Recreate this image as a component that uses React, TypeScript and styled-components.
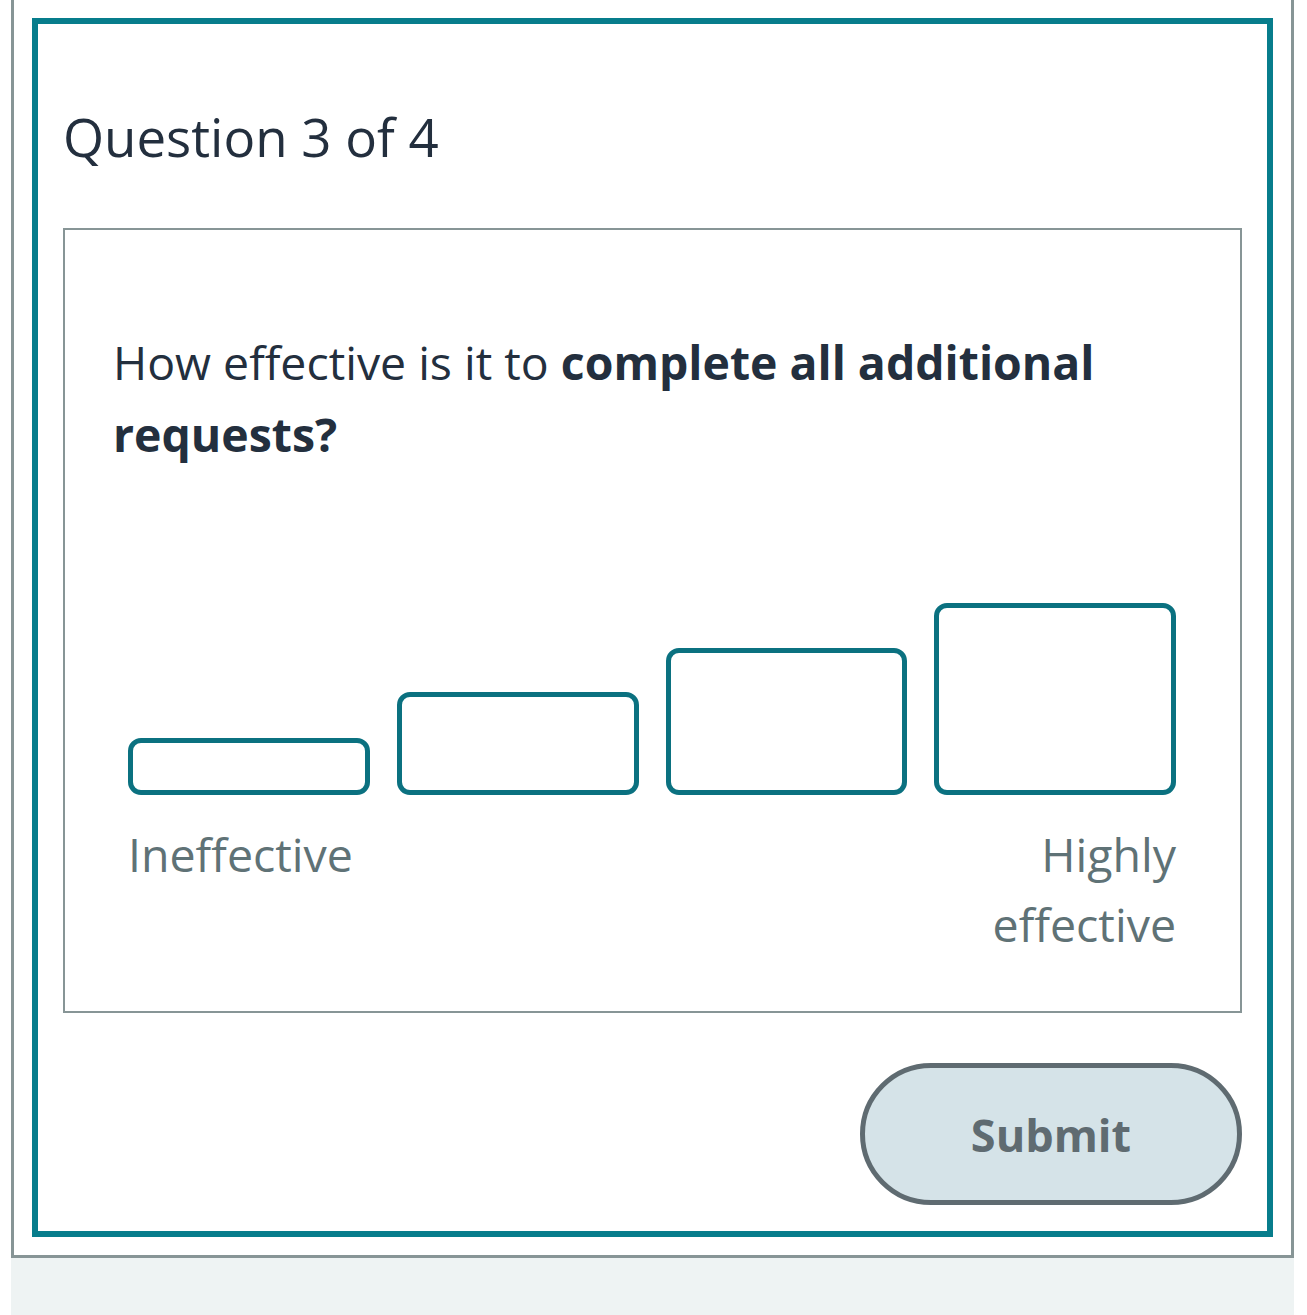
import React, { FC, useState } from 'react'
import styled, { createGlobalStyle } from 'styled-components'

const palette = {
  ink: '#232f3e',
  teal: '#077d8c',
  bar: '#0b7180',
  frame: '#879596',
  muted: '#5f7276',
  buttonBg: '#d5e3e8',
  buttonText: '#5f6b71',
  footer: '#eef3f3',
}

const GlobalStyle = createGlobalStyle`
  html, body {
    margin: 0;
    padding: 0;
    background: #ffffff;
  }
  body {
    font-family: "Open Sans", "Noto Sans", "Liberation Sans", sans-serif;
    color: ${palette.ink};
  }
`

const Page = styled.div`
  width: 1283px;
  margin-left: 11px;
`

const Frame = styled.div`
  border: 3px solid ${palette.frame};
  border-top: none;
  padding: 18px;
`

const Panel = styled.div`
  border: 6px solid ${palette.teal};
  padding: 0 25px 26px 25px;
  display: flex;
  flex-direction: column;
`

const Title = styled.h1`
  margin: 78px 0 0 0;
  font-size: 52.8px;
  font-weight: 400;
  line-height: 70px;
  color: ${palette.ink};
`

const Card = styled.div`
  margin-top: 56px;
  border: 2px solid ${palette.frame};
  padding: 96px 48px 52px 48px;
`

const Prompt = styled.p`
  margin: 0;
  font-size: 46.4px;
  line-height: 72px;
  color: ${palette.ink};

  strong {
    font-weight: 700;
  }
`

const Scale = styled.div`
  margin-top: 133px;
  padding: 0 16px 0 15px;
`

const Bars = styled.div`
  display: flex;
  align-items: flex-end;
  gap: 27px;
`

const Bar = styled.button<{ $height: number; $selected: boolean }>`
  flex: 1;
  height: ${(p) => p.$height}px;
  border: 5px solid ${palette.bar};
  border-radius: 13px;
  background: ${(p) => (p.$selected ? palette.bar : '#ffffff')};
  padding: 0;
  cursor: pointer;
`

const Labels = styled.div`
  margin-top: 24px;
  display: flex;
  justify-content: space-between;
  align-items: flex-start;
`

const Label = styled.span<{ $align: 'left' | 'right' }>`
  font-size: 46.5px;
  line-height: 70px;
  color: ${palette.muted};
  text-align: ${(p) => p.$align};
  width: 240px;
`

const Actions = styled.div`
  margin-top: 50px;
  display: flex;
  justify-content: flex-end;
`

const SubmitButton = styled.button`
  width: 382px;
  height: 142px;
  border: 5px solid ${palette.buttonText};
  border-radius: 71px;
  background: ${palette.buttonBg};
  color: ${palette.buttonText};
  font-family: inherit;
  font-size: 45px;
  font-weight: 700;
  cursor: default;
`

const Footer = styled.div`
  height: 60px;
  background: ${palette.footer};
`

const heights = [57, 103, 147, 192]

const App: FC = () => {
  const [selected, setSelected] = useState<number | null>(null)

  return (
    <>
      <GlobalStyle />
      <Page>
        <Frame>
          <Panel>
            <Title>Question 3 of 4</Title>
            <Card>
              <Prompt>
                How effective is it to <strong>complete all additional requests?</strong>
              </Prompt>
              <Scale>
                <Bars>
                  {heights.map((h, index) => (
                    <Bar
                      key={index}
                      type="button"
                      $height={h}
                      $selected={selected === index}
                      onClick={() => setSelected(index)}
                    />
                  ))}
                </Bars>
                <Labels>
                  <Label $align="left">Ineffective</Label>
                  <Label $align="right">Highly effective</Label>
                </Labels>
              </Scale>
            </Card>
            <Actions>
              <SubmitButton type="button" disabled={selected === null}>
                Submit
              </SubmitButton>
            </Actions>
          </Panel>
        </Frame>
        <Footer />
      </Page>
    </>
  )
}

export default App
